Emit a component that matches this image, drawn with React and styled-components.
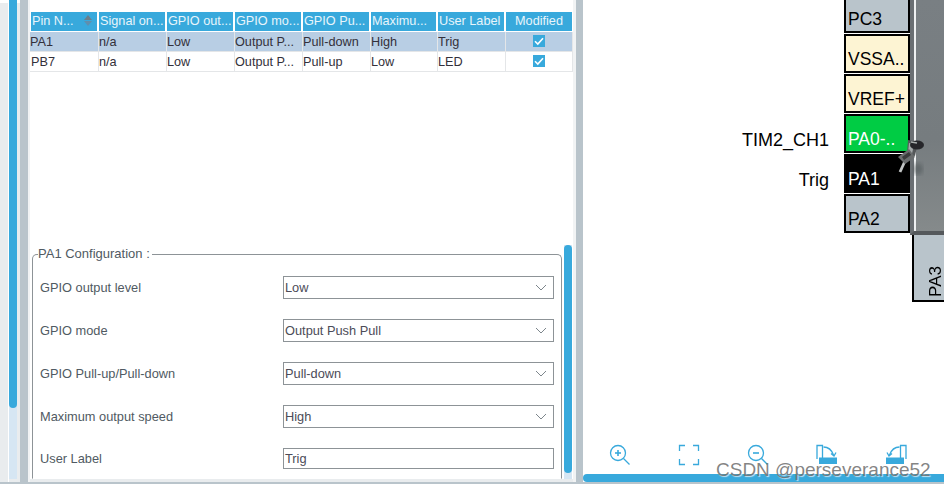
import React from 'react'
import styled, { createGlobalStyle } from 'styled-components'

const rows = [
  { pin: 'PA1', signal: 'n/a', level: 'Low', mode: 'Output P...', pull: 'Pull-down', speed: 'High', label: 'Trig' },
  { pin: 'PB7', signal: 'n/a', level: 'Low', mode: 'Output P...', pull: 'Pull-up', speed: 'Low', label: 'LED' },
]

const heads = ['Signal on...', 'GPIO out...', 'GPIO mo...', 'GPIO Pu...', 'Maximu...', 'User Label']

const fields = [
  { name: 'GPIO output level', value: 'Low' },
  { name: 'GPIO mode', value: 'Output Push Pull' },
  { name: 'GPIO Pull-up/Pull-down', value: 'Pull-down' },
  { name: 'Maximum output speed', value: 'High' },
  { name: 'User Label', value: 'Trig', plain: true },
]

const pins = [
  { name: 'PC3', h: 33, bg: '#b9c4cb', first: true },
  { name: 'VSSA..', h: 39, bg: '#fdf4d3' },
  { name: 'VREF+', h: 39, bg: '#fdf4d3' },
  { name: 'PA0-..', h: 39, bg: '#00cc44', fg: '#fff', label: 'TIM2_CH1' },
  { name: 'PA1', h: 39, bg: '#000', fg: '#fff', label: 'Trig' },
  { name: 'PA2', h: 39, bg: '#b9c4cb' },
]

const blue = '#38a9dc'

function Chevron() {
  return (
    <svg width="12" height="7" viewBox="0 0 12 7">
      <path d="M1 1l5 5 5-5" fill="none" stroke="#7d868c" strokeWidth="1" />
    </svg>
  )
}

function Tick() {
  return (
    <CheckBox>
      <svg width="12" height="12" viewBox="0 0 12 12">
        <path d="M2 6.2l2.800 2.800L10 3.200" fill="none" stroke="#fff" strokeWidth="1.6" />
      </svg>
    </CheckBox>
  )
}

function PushPin() {
  return (
    <PinIcon width="34" height="40" viewBox="0 0 34 40">
      <defs>
        <filter id="soft"><feGaussianBlur stdDeviation="2" /></filter>
        <filter id="edge"><feGaussianBlur stdDeviation="0.4" /></filter>
      </defs>
      <ellipse cx="24" cy="33" rx="5" ry="6" fill="#4e5456" opacity="0.55" filter="url(#soft)" />
      <g filter="url(#edge)">
        <path d="M11 25L6 36" stroke="#c2c5c5" strokeWidth="2.8" />
        <path d="M14 4l10 2-3 14-8-2z" fill="#54585a" />
        <path d="M15 7l5 1-2 10-4-1z" fill="#a4a8a9" />
        <path d="M4 21l11-8 6 8-10 7z" fill="#6a6d6e" />
        <path d="M8 21l7-5 2 3-7 5z" fill="#3a3c3d" />
        <ellipse cx="23" cy="9" rx="7" ry="4.500" fill="#25282a" />
        <path d="M17 6l6 1" stroke="#a9adad" strokeWidth="1.6" />
      </g>
    </PinIcon>
  )
}

function ToolIcon({ kind }) {
  if (kind === 'in' || kind === 'out') {
    return (
      <svg width="22" height="22" viewBox="0 0 22 22" fill="none" stroke={blue} strokeWidth="1.3">
        <circle cx="9" cy="9" r="7.500" />
        <path d="M14.500 14.500l6 6" />
        <path d="M6 9h6" strokeWidth="1.6" />
        {kind === 'in' && <path d="M9 6v6" strokeWidth="1.6" />}
      </svg>
    )
  }
  if (kind === 'fit') {
    return (
      <svg width="22" height="22" viewBox="0 0 22 22" fill="none" stroke={blue} strokeWidth="1.3">
        <path d="M1.500 7V1.500H7M15 1.500h5.500V7M20.500 15v5.500H15M7 20.500H1.500V15" />
      </svg>
    )
  }
  const flip = kind === 'left' ? 'translate(22 0) scale(-1 1)' : undefined
  return (
    <svg width="22" height="22" viewBox="0 0 22 22" fill="none" stroke={blue} strokeWidth="1.3">
      <g transform={flip}>
        <path d="M1 15V1.500h5.500V15" />
        <rect x="3" y="13.500" width="18" height="6.500" fill={blue} stroke="none" />
        <path d="M7.500 3c4 0 8 2.500 10 8" />
        <path d="M15 9.500l3 2.500 2-3.500" />
      </g>
    </svg>
  )
}

export default function App() {
  return (
    <Screen>
      <GlobalStyle />
      <Main>
        <LeftEdge>
          <RailThumb />
        </LeftEdge>
        <GrayBar $w={8} />
        <PinPanel>
          <TableArea>
            <Table>
              <HeadCell>
                Pin N...
                <SortArrows>
                  <i />
                  <b />
                </SortArrows>
              </HeadCell>
              {heads.map((h) => (
                <HeadCell key={h}>{h}</HeadCell>
              ))}
              <HeadCell $center>Modified</HeadCell>
              {rows.map((r, i) => (
                <React.Fragment key={r.pin}>
                  {[r.pin, r.signal, r.level, r.mode, r.pull, r.speed, r.label].map((v, j) => (
                    <Cell key={j} $sel={i === 0} $first={j === 0} $inset={j === 0 && i === 1}>
                      {v}
                    </Cell>
                  ))}
                  <Cell $sel={i === 0} $center $last>
                    <Tick />
                  </Cell>
                </React.Fragment>
              ))}
            </Table>
          </TableArea>
          <ConfigArea>
            <ConfigBox>
              <Legend>PA1 Configuration :</Legend>
              {fields.map((f) => (
                <Field key={f.name} $plain={f.plain}>
                  <FieldName>{f.name}</FieldName>
                  <Select>
                    <span>{f.value}</span>
                    {!f.plain && <Chevron />}
                  </Select>
                </Field>
              ))}
            </ConfigBox>
            <ConfigScroll>
              <ConfigThumb />
            </ConfigScroll>
          </ConfigArea>
          <PanelFoot />
        </PinPanel>
        <GrayBar $w={7} />
        <Canvas>
          <Chip>
            <PinColumn>
              {pins.map((p) => (
                <PinRow key={p.name}>
                  {p.label && <PinLabel>{p.label}</PinLabel>}
                  <Pin $h={p.h} $bg={p.bg} $fg={p.fg} $first={p.first}>
                    {p.name}
                  </Pin>
                </PinRow>
              ))}
            </PinColumn>
            <PackageCol>
              <Package />
              <BottomPin>
                <span>PA3</span>
              </BottomPin>
            </PackageCol>
            <PushPin />
          </Chip>
          <Toolbar>
            {['in', 'fit', 'out', 'right', 'left'].map((k) => (
              <ToolIcon key={k} kind={k} />
            ))}
          </Toolbar>
          <HScroll />
          <Watermark>CSDN @perseverance52</Watermark>
        </Canvas>
      </Main>
      <BottomLine />
    </Screen>
  )
}

const GlobalStyle = createGlobalStyle`
  html, body { margin: 0; padding: 0; background: #fff; overflow: hidden; }
  body { font-family: "Liberation Sans", Arial, sans-serif; }
`

const Screen = styled.div`
  width: 944px;
  height: 489px;
  overflow: hidden;
  background: #fff;
`

const Main = styled.div`
  height: 482px;
  display: flex;
`

const BottomLine = styled.div`
  height: 2px;
  background: #b9c4cb;
`

const LeftEdge = styled.div`
  width: 8px;
  height: 479px;
  margin: 0 3px 0 9px;
  background: #d6e6f3;
  box-shadow: -9px 3px 0 #e9ecee, 3px 3px 0 #e9ecee, 0 3px 0 #e9ecee;
`

const RailThumb = styled.div`
  height: 408px;
  background: ${blue};
  border-radius: 0 0 4px 4px;
`

const GrayBar = styled.div`
  width: ${(p) => p.$w}px;
  flex: none;
  background: #b9c4cb;
`

const PinPanel = styled.div`
  width: 548px;
  flex: none;
  box-sizing: border-box;
  border-left: 2px solid #f1f3f4;
  border-right: 3px solid #f1f3f4;
  display: flex;
  flex-direction: column;
`

const TableArea = styled.div`
  height: 235px;
  padding-top: 12px;
  box-sizing: border-box;
`

const Table = styled.div`
  display: grid;
  grid-template-columns: 68px 68px 68px 68px 68px 67px 68px 68px;
  grid-auto-rows: 20px;
  width: 543px;
  font-size: 12.7px;
`

const HeadCell = styled.div`
  background: ${blue};
  color: #e8f5fb;
  margin: 0 1px;
  height: 19px;
  line-height: 19px;
  padding-left: ${(p) => (p.$center ? 0 : '1px')};
  text-align: ${(p) => (p.$center ? 'center' : 'left')};
  white-space: nowrap;
  overflow: hidden;
  position: relative;
`

const SortArrows = styled.span`
  position: absolute;
  right: 5px;
  top: 3px;
  display: flex;
  flex-direction: column;
  gap: 1px;
  i, b {
    display: block;
    width: 0;
    height: 0;
    border-left: 4px solid transparent;
    border-right: 4px solid transparent;
  }
  i { border-bottom: 5px solid #6b7f8c; }
  b { border-top: 5px solid #5f8fae; }
`

const Cell = styled.div`
  background: ${(p) => (p.$sel ? '#b8cee4' : '#fff')};
  color: #33303a;
  height: 20px;
  box-sizing: border-box;
  padding-top: 1px;
  padding-left: ${(p) => (p.$inset ? '1px' : 0)};
  border-left: ${(p) => (p.$first ? 0 : '1px solid #e4e6e8')};
  border-right: ${(p) => (p.$last ? '1px solid #e4e6e8' : 0)};
  border-bottom: 1px solid #e4e6e8;
  display: flex;
  align-items: center;
  justify-content: ${(p) => (p.$center ? 'center' : 'flex-start')};
  white-space: nowrap;
  overflow: hidden;
`

const CheckBox = styled.span`
  width: 12px;
  height: 12px;
  margin: -2px 1px 0 0;
  background: ${blue};
  display: flex;
`

const ConfigArea = styled.div`
  height: 244px;
  display: flex;
  align-items: flex-start;
  padding-left: 2px;
`

const ConfigBox = styled.div`
  width: 530px;
  height: 225px;
  margin-top: 19px;
  padding: 21px 0 0 7px;
  box-sizing: border-box;
  position: relative;
  border: 1px solid #8d9397;
  border-bottom-color: transparent;
  border-radius: 5px 5px 0 0;
`

const Legend = styled.div`
  position: absolute;
  top: -8px;
  left: 5px;
  padding: 0 2px 0 0;
  background: #fff;
  font-size: 13px;
  line-height: 14px;
  color: #505a62;
`

const Field = styled.div`
  display: flex;
  align-items: stretch;
  height: ${(p) => (p.$plain ? '21px' : '23px')};
  margin-bottom: ${(p) => (p.$plain ? 0 : '20px')};
`

const FieldName = styled.div`
  width: 243px;
  flex: none;
  display: flex;
  align-items: center;
  font-size: 12.8px;
  color: #505a62;
`

const Select = styled.div`
  width: 271px;
  flex: none;
  box-sizing: border-box;
  border: 1px solid #8d9397;
  padding: 0 6px 0 1px;
  display: flex;
  align-items: center;
  justify-content: space-between;
  font-size: 12.8px;
  color: #4c4c58;
`

const ConfigScroll = styled.div`
  width: 8px;
  height: 234px;
  margin: 10px 0 0 2px;
  background: #d6e6f3;
`

const ConfigThumb = styled.div`
  height: 228px;
  background: ${blue};
  border-radius: 4px;
`

const PanelFoot = styled.div`
  height: 3px;
  background: #e9ecee;
`

const Canvas = styled.div`
  flex: 1;
  position: relative;
  display: flex;
  flex-direction: column;
`

const Chip = styled.div`
  height: 444px;
  display: flex;
  justify-content: flex-end;
  align-items: flex-start;
  position: relative;
`

const PinColumn = styled.div`
  display: flex;
  flex-direction: column;
  align-items: flex-end;
`

const PinRow = styled.div`
  display: flex;
  align-items: flex-end;
`

const PinLabel = styled.div`
  font-size: 18px;
  line-height: 20px;
  color: #000;
  margin-right: 15px;
  padding-bottom: 4px;
`

const Pin = styled.div`
  width: 66px;
  height: ${(p) => p.$h}px;
  margin-bottom: 1px;
  box-sizing: border-box;
  background: ${(p) => p.$bg};
  color: ${(p) => p.$fg || '#000'};
  border: 2px solid #000;
  border-top: ${(p) => (p.$first ? 0 : '2px solid #000')};
  font-size: 17.5px;
  line-height: 18px;
  padding: 0 0 3px 2px;
  display: flex;
  align-items: flex-end;
  white-space: nowrap;
  overflow: hidden;
`

const PackageCol = styled.div`
  width: 34px;
  display: flex;
  flex-direction: column;
  align-items: flex-end;
`

const Package = styled.div`
  width: 34px;
  height: 235px;
  box-sizing: border-box;
  background: linear-gradient(180deg, #797f83 0%, #767c7f 60%, #858a8b 100%);
  border-left: 4px solid #6a6f73;
  border-bottom: 4px solid #55595c;
  box-shadow: inset 2px 0 0 #eef0f1;
`

const BottomPin = styled.div`
  width: 32px;
  height: 67px;
  box-sizing: border-box;
  background: #b9c4cb;
  border: 2px solid #000;
  border-top: 0;
  border-right: 0;
  display: flex;
  align-items: flex-end;
  span {
    display: block;
    writing-mode: vertical-rl;
    transform: rotate(180deg);
    font-size: 17px;
    line-height: 17px;
    color: #000;
    padding-top: 3px;
    margin-left: 13px;
    white-space: nowrap;
  }
`

const PinIcon = styled.svg`
  position: absolute;
  right: 16px;
  top: 136px;
`

const Toolbar = styled.div`
  height: 30px;
  padding-left: 26px;
  display: flex;
  gap: 47px;
  align-items: flex-start;
`

const HScroll = styled.div`
  height: 8px;
  background: ${blue};
  border-radius: 4px 0 0 4px;
`

const Watermark = styled.div`
  position: absolute;
  left: 133px;
  top: 459px;
  font-size: 19px;
  line-height: 21px;
  color: rgba(110, 110, 110, 0.85);
  text-shadow: 1px 1px 1px rgba(255, 255, 255, 0.7);
  white-space: nowrap;
`
